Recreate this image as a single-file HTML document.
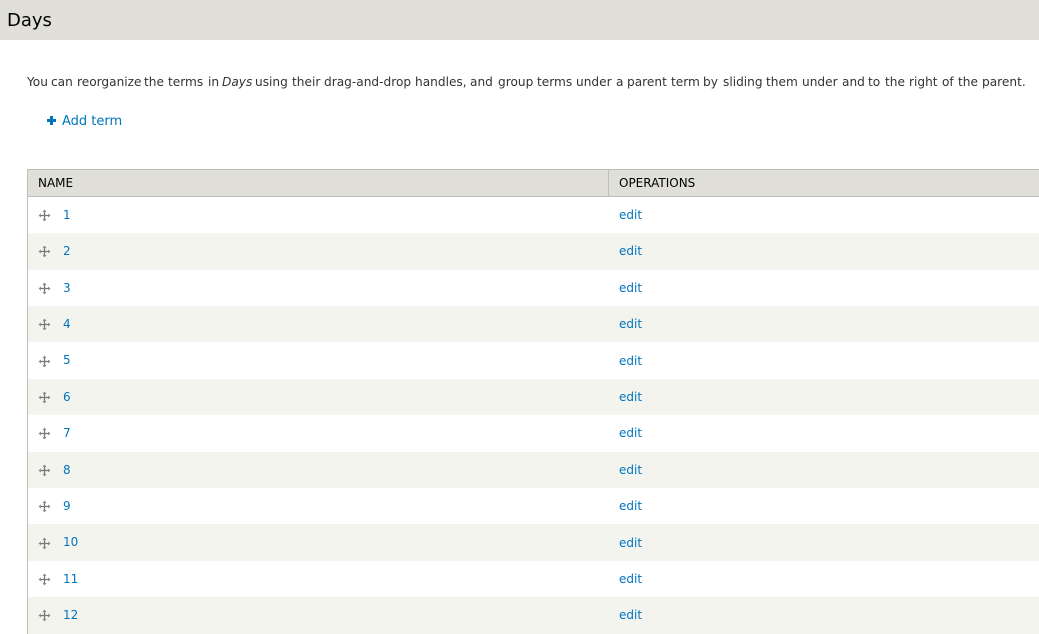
<!DOCTYPE html>
<html><head><meta charset="utf-8">
<style>
html,body{margin:0;padding:0;background:#fff}
body{width:1039px;height:634px;overflow:hidden;position:relative;font-family:"DejaVu Sans",sans-serif;font-size:12px;color:#333}
.a{position:absolute;white-space:nowrap;line-height:16px}
.l{color:#0074bd}
.r{position:absolute;left:28px;width:1011px;height:37px}
.h{position:absolute;left:38px;width:13px;height:13px}
.p{position:absolute;left:0;top:74px;width:1039px;height:16px;font-size:12.16px;line-height:16px;white-space:nowrap}
.p span,.p i{position:absolute;top:0}
</style></head><body>
<div style="position:absolute;left:0;top:0;width:1039px;height:40px;background:#e0e0d8"></div>
<div class="a" style="left:7px;top:9px;font-size:18px;line-height:24px;color:#000">Days</div>
<div class="p"><span style="left:27px">You</span> <span style="left:51px">can</span> <span style="left:77px">reorganize</span> <span style="left:144px">the</span> <span style="left:168px">terms</span> <span style="left:208px">in</span> <i style="left:222px">Days</i> <span style="left:255px">using</span> <span style="left:292px">their</span> <span style="left:324px">drag-and-drop</span> <span style="left:415px">handles,</span> <span style="left:470px">and</span> <span style="left:498px">group</span> <span style="left:537px">terms</span> <span style="left:576px">under</span> <span style="left:616px">a</span> <span style="left:627px">parent</span> <span style="left:671px">term</span> <span style="left:703px">by</span> <span style="left:723px">sliding</span> <span style="left:766px">them</span> <span style="left:802px">under</span> <span style="left:842px">and</span> <span style="left:868px">to</span> <span style="left:885px">the</span> <span style="left:909px">right</span> <span style="left:942px">of</span> <span style="left:958px">the</span> <span style="left:982px">parent.</span></div>
<svg style="position:absolute;left:47px;top:116px" width="9" height="9"><path d="M3 0h3v3h3v3H6v3H3V6H0V3h3z" fill="#0074bd"/></svg>
<div class="a l" style="left:62px;top:114px;font-size:13px">Add term</div>

<div style="position:absolute;left:27px;top:169px;width:1012px;height:28px;background:#e0e0d8;border-top:1px solid #bfbfba;border-bottom:1px solid #bfbfba;box-sizing:border-box"></div>
<div style="position:absolute;left:27px;top:169px;width:1px;height:465px;background:#bfbfba"></div>
<div style="position:absolute;left:608px;top:170px;width:1px;height:26px;background:#bfbfba"></div>
<div class="a" style="left:38px;top:175px;font-size:12px;color:#000">NAME</div>
<div class="a" style="left:619px;top:175px;font-size:12px;color:#000">OPERATIONS</div>

<div class="r" style="top:233px;background:#f3f4ee"></div>
<div class="r" style="top:306px;background:#f3f4ee;height:36px"></div>
<div class="r" style="top:379px;background:#f3f4ee;height:36px"></div>
<div class="r" style="top:452px;background:#f3f4ee;height:36px"></div>
<div class="r" style="top:524px;background:#f3f4ee"></div>
<div class="r" style="top:597px;background:#f3f4ee"></div>

<svg width="0" height="0" style="position:absolute"><defs><g id="g"><path d="M6.5 2v9M2 6.5h9" fill="none" stroke="#777" stroke-width="1.3"/><path d="M4.5 3L6.5 .5 8.5 3zM4.5 10l2 2.5 2-2.5zM3 4.5L.5 6.5 3 8.5zM10 4.5l2.5 2-2.5 2z" fill="#8a8a8a"/></g></defs></svg>

<svg class="h" style="top:209px"><use href="#g"/></svg><div class="a l" style="left:63px;top:207px">1</div><div class="a l" style="left:619px;top:207px">edit</div>
<svg class="h" style="top:245px"><use href="#g"/></svg><div class="a l" style="left:63px;top:243px">2</div><div class="a l" style="left:619px;top:243px">edit</div>
<svg class="h" style="top:282px"><use href="#g"/></svg><div class="a l" style="left:63px;top:280px">3</div><div class="a l" style="left:619px;top:280px">edit</div>
<svg class="h" style="top:318px"><use href="#g"/></svg><div class="a l" style="left:63px;top:316px">4</div><div class="a l" style="left:619px;top:316px">edit</div>
<svg class="h" style="top:355px"><use href="#g"/></svg><div class="a l" style="left:63px;top:352px">5</div><div class="a l" style="left:619px;top:353px">edit</div>
<svg class="h" style="top:391px"><use href="#g"/></svg><div class="a l" style="left:63px;top:389px">6</div><div class="a l" style="left:619px;top:389px">edit</div>
<svg class="h" style="top:427px"><use href="#g"/></svg><div class="a l" style="left:63px;top:425px">7</div><div class="a l" style="left:619px;top:425px">edit</div>
<svg class="h" style="top:464px"><use href="#g"/></svg><div class="a l" style="left:63px;top:462px">8</div><div class="a l" style="left:619px;top:462px">edit</div>
<svg class="h" style="top:500px"><use href="#g"/></svg><div class="a l" style="left:63px;top:498px">9</div><div class="a l" style="left:619px;top:498px">edit</div>
<svg class="h" style="top:537px"><use href="#g"/></svg><div class="a l" style="left:63px;top:534px">10</div><div class="a l" style="left:619px;top:535px">edit</div>
<svg class="h" style="top:573px"><use href="#g"/></svg><div class="a l" style="left:63px;top:571px">11</div><div class="a l" style="left:619px;top:571px">edit</div>
<svg class="h" style="top:609px"><use href="#g"/></svg><div class="a l" style="left:63px;top:607px">12</div><div class="a l" style="left:619px;top:607px">edit</div>
</body></html>
